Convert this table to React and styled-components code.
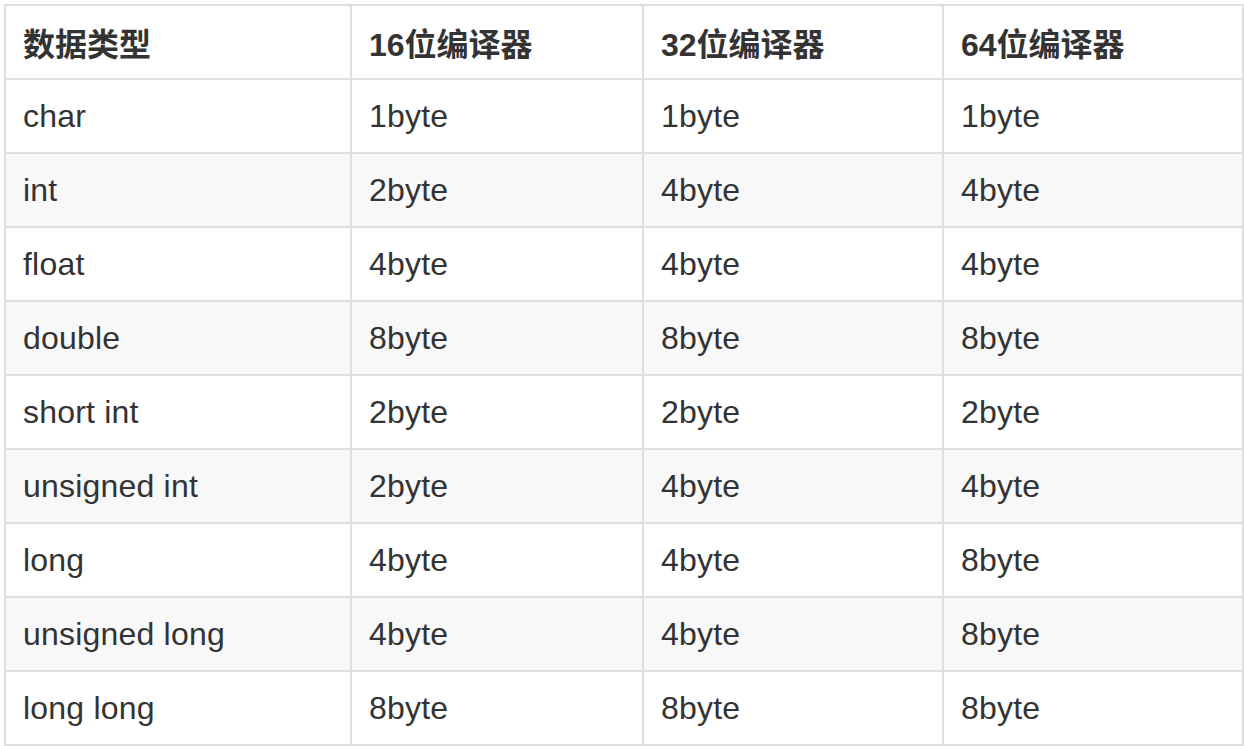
import React from 'react'
import styled, { createGlobalStyle } from 'styled-components'

const GlobalStyle = createGlobalStyle`
  html, body {
    margin: 0;
    padding: 0;
    background: #fff;
  }
  body {
    font-family: "Liberation Sans", "Noto Sans CJK SC", sans-serif;
    color: #333;
  }
`

const Page = styled.div`
  padding: 4px;
`

const Table = styled.table`
  width: 1240px;
  table-layout: fixed;
  border-collapse: collapse;
  font-size: 32px;
`

const Row = styled.tr`
  height: 74px;
  background: ${({ striped }) => (striped ? '#f8f8f8' : '#fff')};
`

const HeadCell = styled.th`
  border: 2px solid #dfdfdf;
  padding: 0 17px;
  text-align: left;
  font-weight: bold;
  color: #333;
`

const Cell = styled.td`
  border: 2px solid #dfdfdf;
  padding: 0 17px;
  color: #333;
  white-space: nowrap;
  letter-spacing: 0.2px;
`

const columns = [
  { title: '数据类型', width: 346 },
  { title: '16位编译器', width: 292 },
  { title: '32位编译器', width: 300 },
  { title: '64位编译器', width: 300 },
]

const rows = [
  ['char', '1byte', '1byte', '1byte'],
  ['int', '2byte', '4byte', '4byte'],
  ['float', '4byte', '4byte', '4byte'],
  ['double', '8byte', '8byte', '8byte'],
  ['short int', '2byte', '2byte', '2byte'],
  ['unsigned int', '2byte', '4byte', '4byte'],
  ['long', '4byte', '4byte', '8byte'],
  ['unsigned long', '4byte', '4byte', '8byte'],
  ['long long', '8byte', '8byte', '8byte'],
]

const App = () => {
  return (
    <Page>
      <GlobalStyle />
      <Table>
        <colgroup>
          {columns.map((c) => (
            <col key={c.title} style={{ width: c.width }} />
          ))}
        </colgroup>
        <thead>
          <Row>
            {columns.map((c) => (
              <HeadCell key={c.title}>{c.title}</HeadCell>
            ))}
          </Row>
        </thead>
        <tbody>
          {rows.map((r, i) => (
            <Row key={r[0]} striped={i % 2 === 1}>
              {r.map((v, j) => (
                <Cell key={j}>{v}</Cell>
              ))}
            </Row>
          ))}
        </tbody>
      </Table>
    </Page>
  )
}

export default App
